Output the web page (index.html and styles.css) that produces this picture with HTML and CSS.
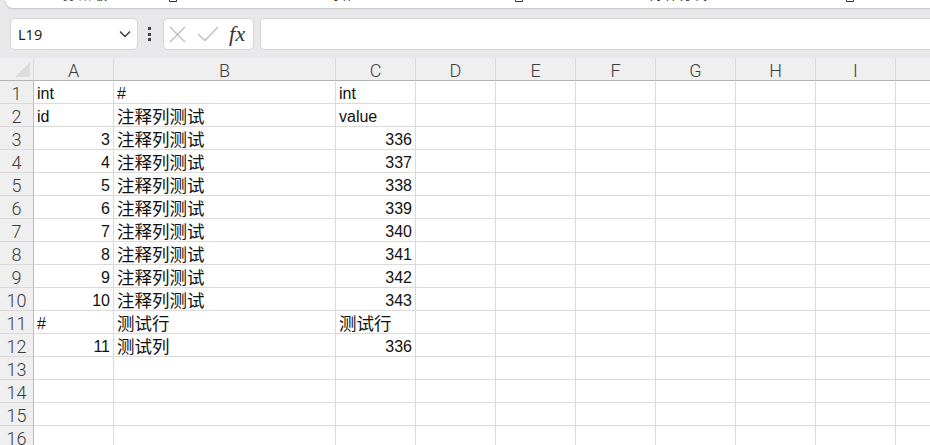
FILE: index.html
```html
<!DOCTYPE html>
<html lang="zh-CN">
<head>
<meta charset="utf-8">
<title>Sheet</title>
<link rel="stylesheet" href="styles.css">
</head>
<body>
<div class="ribbon">
  <span class="rl l1">剪贴板</span>
  <svg class="launch k1" width="8" height="8" viewBox="0 0 8 8"><path d="M0.5 0.5V7.5H7.5V4" fill="none" stroke="#333"/><path d="M3 5L7 1" stroke="#333"/></svg>
  <span class="rl l2">字体</span>
  <svg class="launch k2" width="8" height="8" viewBox="0 0 8 8"><path d="M0.5 0.5V7.5H7.5V4" fill="none" stroke="#333"/><path d="M3 5L7 1" stroke="#333"/></svg>
  <span class="rl l3">对齐方式</span>
  <svg class="launch k3" width="8" height="8" viewBox="0 0 8 8"><path d="M0.5 0.5V7.5H7.5V4" fill="none" stroke="#333"/><path d="M3 5L7 1" stroke="#333"/></svg>
</div>

<div class="fbar">
  <div class="namebox">
    <span>L19</span>
    <svg width="12" height="8" viewBox="0 0 12 8"><polyline points="1,1.5 6,6.5 11,1.5" fill="none" stroke="#333" stroke-width="1.3"/></svg>
  </div>
  <div class="dots"><i></i><i></i><i></i></div>
  <div class="fxbox">
    <svg class="ic-x" width="17" height="17" viewBox="0 0 17 17"><path d="M1 1L16 16M16 1L1 16" stroke="#bdbdbd" stroke-width="1.3" fill="none"/></svg>
    <svg class="ic-ok" width="22" height="16" viewBox="0 0 22 16"><polyline points="1,8 8,14.5 21,1" fill="none" stroke="#bdbdbd" stroke-width="1.3"/></svg>
    <span class="fx">fx</span>
  </div>
  <div class="finput"></div>
</div>

<div class="sheet">
  <div class="c hd corner"><svg width="15" height="15" viewBox="0 0 15 15"><polygon points="15,0 15,15 0,15" fill="#dcdcdc"/></svg></div>
  <div class="c hd">A</div><div class="c hd">B</div><div class="c hd">C</div><div class="c hd">D</div><div class="c hd">E</div><div class="c hd">F</div><div class="c hd">G</div><div class="c hd">H</div><div class="c hd">I</div><div class="c hd"></div>

  <div class="c rh">1</div><div class="c">int</div><div class="c">#</div><div class="c">int</div><div class="c"></div><div class="c"></div><div class="c"></div><div class="c"></div><div class="c"></div><div class="c"></div><div class="c"></div>
  <div class="c rh">2</div><div class="c">id</div><div class="c"><span class="zh">注释列测试</span></div><div class="c">value</div><div class="c"></div><div class="c"></div><div class="c"></div><div class="c"></div><div class="c"></div><div class="c"></div><div class="c"></div>
  <div class="c rh">3</div><div class="c r">3</div><div class="c"><span class="zh">注释列测试</span></div><div class="c r">336</div><div class="c"></div><div class="c"></div><div class="c"></div><div class="c"></div><div class="c"></div><div class="c"></div><div class="c"></div>
  <div class="c rh">4</div><div class="c r">4</div><div class="c"><span class="zh">注释列测试</span></div><div class="c r">337</div><div class="c"></div><div class="c"></div><div class="c"></div><div class="c"></div><div class="c"></div><div class="c"></div><div class="c"></div>
  <div class="c rh">5</div><div class="c r">5</div><div class="c"><span class="zh">注释列测试</span></div><div class="c r">338</div><div class="c"></div><div class="c"></div><div class="c"></div><div class="c"></div><div class="c"></div><div class="c"></div><div class="c"></div>
  <div class="c rh">6</div><div class="c r">6</div><div class="c"><span class="zh">注释列测试</span></div><div class="c r">339</div><div class="c"></div><div class="c"></div><div class="c"></div><div class="c"></div><div class="c"></div><div class="c"></div><div class="c"></div>
  <div class="c rh">7</div><div class="c r">7</div><div class="c"><span class="zh">注释列测试</span></div><div class="c r">340</div><div class="c"></div><div class="c"></div><div class="c"></div><div class="c"></div><div class="c"></div><div class="c"></div><div class="c"></div>
  <div class="c rh">8</div><div class="c r">8</div><div class="c"><span class="zh">注释列测试</span></div><div class="c r">341</div><div class="c"></div><div class="c"></div><div class="c"></div><div class="c"></div><div class="c"></div><div class="c"></div><div class="c"></div>
  <div class="c rh">9</div><div class="c r">9</div><div class="c"><span class="zh">注释列测试</span></div><div class="c r">342</div><div class="c"></div><div class="c"></div><div class="c"></div><div class="c"></div><div class="c"></div><div class="c"></div><div class="c"></div>
  <div class="c rh">10</div><div class="c r">10</div><div class="c"><span class="zh">注释列测试</span></div><div class="c r">343</div><div class="c"></div><div class="c"></div><div class="c"></div><div class="c"></div><div class="c"></div><div class="c"></div><div class="c"></div>
  <div class="c rh">11</div><div class="c">#</div><div class="c"><span class="zh">测试行</span></div><div class="c"><span class="zh">测试行</span></div><div class="c"></div><div class="c"></div><div class="c"></div><div class="c"></div><div class="c"></div><div class="c"></div><div class="c"></div>
  <div class="c rh">12</div><div class="c r">11</div><div class="c"><span class="zh">测试列</span></div><div class="c r">336</div><div class="c"></div><div class="c"></div><div class="c"></div><div class="c"></div><div class="c"></div><div class="c"></div><div class="c"></div>
  <div class="c rh">13</div><div class="c"></div><div class="c"></div><div class="c"></div><div class="c"></div><div class="c"></div><div class="c"></div><div class="c"></div><div class="c"></div><div class="c"></div><div class="c"></div>
  <div class="c rh">14</div><div class="c"></div><div class="c"></div><div class="c"></div><div class="c"></div><div class="c"></div><div class="c"></div><div class="c"></div><div class="c"></div><div class="c"></div><div class="c"></div>
  <div class="c rh">15</div><div class="c"></div><div class="c"></div><div class="c"></div><div class="c"></div><div class="c"></div><div class="c"></div><div class="c"></div><div class="c"></div><div class="c"></div><div class="c"></div>
  <div class="c rh">16</div><div class="c"></div><div class="c"></div><div class="c"></div><div class="c"></div><div class="c"></div><div class="c"></div><div class="c"></div><div class="c"></div><div class="c"></div><div class="c"></div>
</div>
</body>
</html>
```

FILE: styles.css
```css
html, body {
  margin: 0;
  width: 930px;
  height: 445px;
  overflow: hidden;
}
body {
  background: #e8e8eb;
  font-family: "Liberation Sans", "Noto Sans CJK SC", sans-serif;
}

/* ribbon remnant: only the bottom edge of the ribbon shows */
.ribbon {
  height: 8px;
  margin: 0 -30px 10px 6px;
  background: #fff;
  border-radius: 0 0 7px 7px;
  box-shadow: 0 1px 2px rgba(0, 0, 0, 0.18);
  display: flex;
  align-items: flex-end;
  overflow: hidden;
}
.rl {
  font-family: "Noto Sans CJK SC", sans-serif;
  font-size: 12px;
  line-height: 12px;
  color: #222;
  margin-bottom: 7px;
  white-space: nowrap;
}
.launch { margin-bottom: 6px; flex: none; }
.l1 { margin-left: 57px; letter-spacing: 4px; }
.k1 { margin-left: 58px; }
.l2 { margin-left: 154px; letter-spacing: -1px; }
.k2 { margin-left: 162px; }
.l3 { margin-left: 127px; letter-spacing: 3px; }
.k3 { margin-left: 136px; }

/* formula bar */
.fbar {
  display: flex;
  height: 32px;
  margin: 0 0 8px 10px;
}
.namebox {
  width: 128px;
  box-sizing: border-box;
  border: 1px solid #d6d6d6;
  border-radius: 5px;
  background: #fff;
  display: flex;
  align-items: center;
  justify-content: space-between;
  padding: 0 6px 0 7px;
  font-family: "Noto Sans", sans-serif;
  font-size: 14.5px;
  color: #1f1f1f;
}
.dots {
  width: 22px;
  margin-right: 3px;
  display: flex;
  flex-direction: column;
  align-items: center;
  justify-content: center;
  gap: 2.5px;
}
.dots i {
  display: block;
  width: 3px;
  height: 3px;
  background: #444;
}
.fxbox {
  width: 91px;
  box-sizing: border-box;
  border: 1px solid #d6d6d6;
  border-radius: 5px;
  background: #fff;
  display: flex;
  align-items: center;
  padding-left: 5px;
}
.ic-ok { margin-left: 11px; }
.fx {
  margin-left: 10px;
  font-family: "Liberation Serif", serif;
  font-style: italic;
  font-size: 22px;
  line-height: 22px;
  color: #333;
  letter-spacing: 0.5px;
}
.finput {
  flex: 1;
  margin-left: 6px;
  border: 1px solid #d6d6d6;
  border-right: none;
  border-radius: 5px 0 0 5px;
  background: #fff;
}

/* sheet */
.sheet {
  display: grid;
  grid-template-columns: 34px 80px 222px repeat(8, 80px);
  grid-auto-rows: 23px;
  width: max-content;
}
.c {
  box-sizing: border-box;
  background: #fff;
  border-right: 1px solid #dadada;
  border-bottom: 1px solid #dadada;
  padding: 5px 3px 0;
  line-height: 16px;
  font-size: 16px;
  color: #111;
  white-space: nowrap;
}
.r { text-align: right; }
.zh {
  font-family: "Noto Sans CJK SC", sans-serif;
  font-size: 17.5px;
  line-height: 14px;
}
.hd {
  background: #efefef;
  border-right-color: #d9d9d9;
  border-bottom-color: #b4b4b4;
  padding-top: 3px;
  line-height: 19px;
  text-align: center;
  font-family: Roboto, sans-serif;
  font-weight: 300;
  font-size: 18px;
  color: #3c3c3c;
}
.corner {
  padding: 4px 0 0 15px;
  text-align: left;
}
.corner svg { display: block; }
.rh {
  background: #efefef;
  border-right-color: #bdbdbd;
  padding: 5px 0 0;
  line-height: 16px;
  text-align: center;
  font-family: Roboto, sans-serif;
  font-weight: 300;
  font-size: 18px;
  color: #3c3c3c;
}
```
